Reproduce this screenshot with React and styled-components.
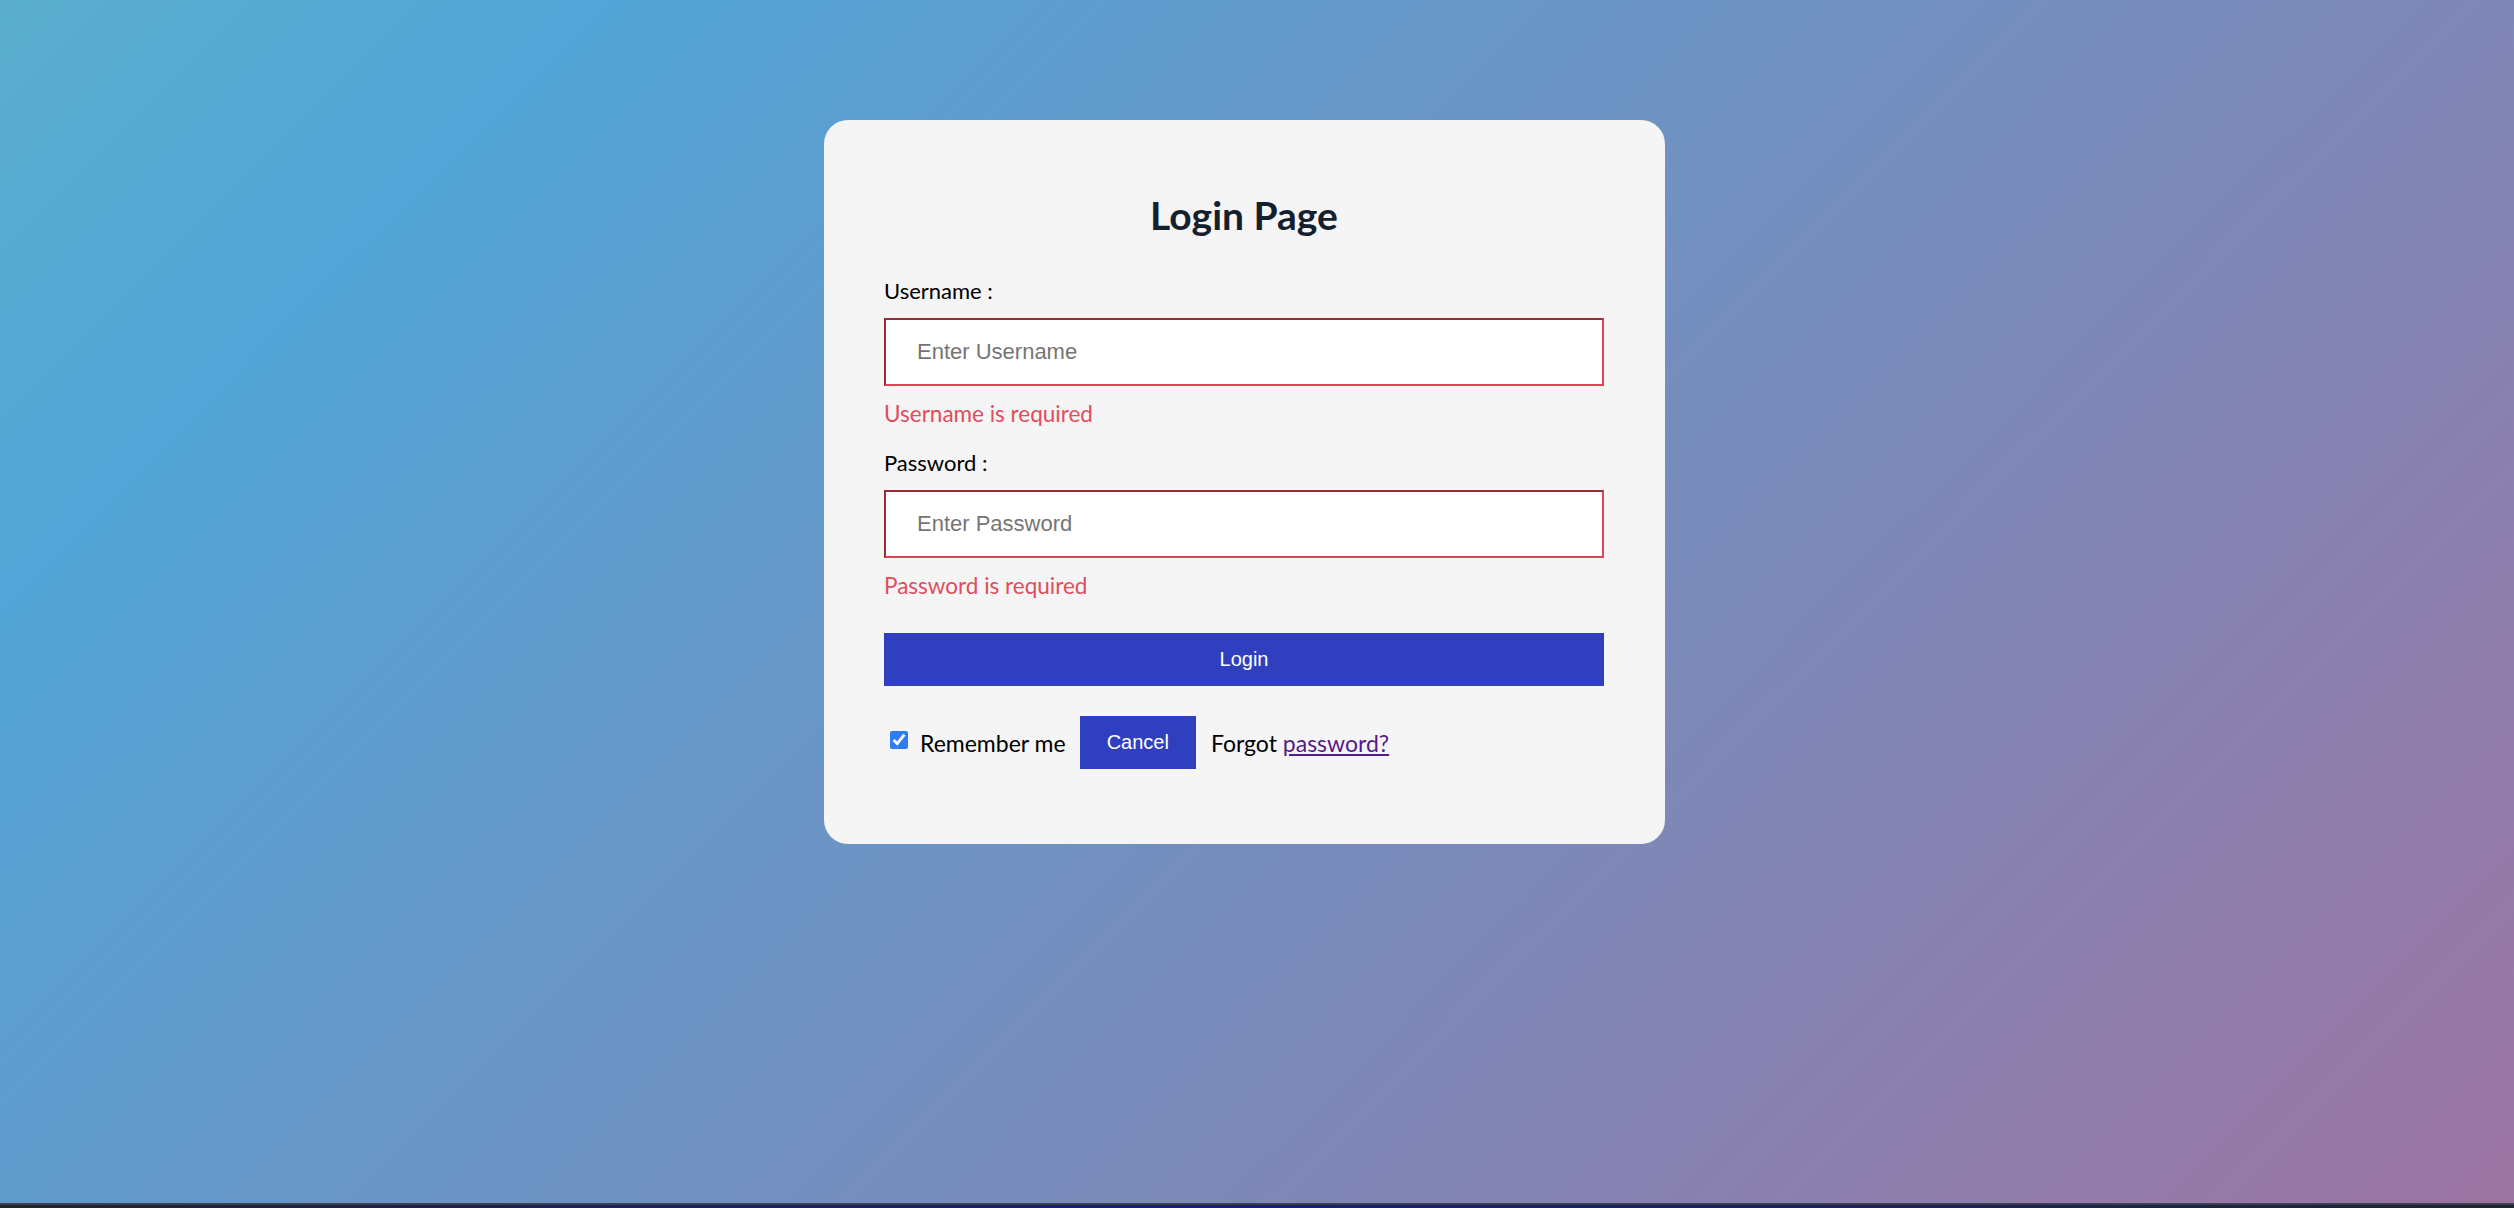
import React from 'react'
import styled, { createGlobalStyle } from 'styled-components';

const GlobalStyle = createGlobalStyle`
    html, body {
        margin: 0;
        padding: 0;
        height: 100%;
    }
    body {
        font-family: Lato, "Open Sans", sans-serif;
    }
    * {
        box-sizing: border-box;
    }
`;

function Field({ label, placeholder, type, error }){
    return (
        <>
            <Label>{label}</Label>
            <Input type={type} placeholder={placeholder} />
            <ErrorText>{error}</ErrorText>
        </>
    )
}

function App(){
    return (
        <>
            <GlobalStyle />
            <Page>
                <Background>
                    <Card>
                        <Title>Login Page</Title>
                        <Field label="Username :" placeholder="Enter Username" type="text" error="Username is required" />
                        <Spacer />
                        <Field label="Password :" placeholder="Enter Password" type="password" error="Password is required" />
                        <SubmitButton type="button">Login</SubmitButton>
                        <BottomRow>
                            <CheckBox type="checkbox" defaultChecked />
                            <RowText>Remember me</RowText>
                            <CancelButton type="button">Cancel</CancelButton>
                            <RowText>Forgot <a href="#">password?</a></RowText>
                        </BottomRow>
                    </Card>
                </Background>
                <TaskbarEdge />
            </Page>
        </>
    )
}

const Page = styled.div`
    height: 100vh;
    display: flex;
    flex-direction: column;
`;

const Background = styled.main`
    flex: 1;
    display: flex;
    justify-content: center;
    align-items: flex-start;
    padding: 120px 25px 0 0;
    background: linear-gradient(135deg, #5aaecd 0%, #52a5d7 16%, #9c74a2 100%);
`;

const TaskbarEdge = styled.div`
    height: 5px;
    border-top: 2px solid #3b4050;
    background: linear-gradient(to right, #22252c 0%, #1a2160 30%, #16206e 50%, #1a2160 70%, #22252c 100%);
`;

const Card = styled.section`
    width: 841px;
    height: 724px;
    padding: 71px 61px 0 60px;
    background: #f5f5f5;
    border-radius: 24px;
    display: flex;
    flex-direction: column;
`;

const Title = styled.h2`
    margin: 0 0 37px 0;
    height: 48px;
    line-height: 48px;
    text-align: center;
    font-size: 39px;
    font-weight: 700;
    color: #14202d;
`;

const Label = styled.label`
    display: block;
    height: 30px;
    line-height: 30px;
    font-size: 22px;
    color: #000;
    margin-bottom: 12px;
`;

const Input = styled.input`
    width: 100%;
    height: 68px;
    padding: 0 20px 0 31px;
    border: 2px solid;
    border-color: #9c2c3a #dd4556 #dd4556 #9c2c3a;
    background: #fff;
    font-family: "Liberation Sans", Arial, sans-serif;
    font-size: 22px;
    color: #222;
    outline: none;
    &::placeholder {
        color: #757575;
    }
`;

const ErrorText = styled.div`
    margin-top: 13px;
    height: 29px;
    line-height: 29px;
    font-size: 22.5px;
    color: #e24c5c;
`;

const Spacer = styled.div`
    height: 20px;
    flex-shrink: 0;
`;

const BaseButton = styled.button`
    height: 53px;
    border: none;
    background: #2f3fbf;
    color: #fff;
    font-family: "Liberation Sans", Arial, sans-serif;
    font-size: 20px;
    cursor: pointer;
`;

const SubmitButton = styled(BaseButton)`
    width: 100%;
    margin-top: 33px;
`;

const CancelButton = styled(BaseButton)`
    padding: 0 27px;
    margin: 0 15px 0 14px;
`;

const BottomRow = styled.div`
    display: flex;
    align-items: center;
    margin-top: 30px;
`;

const CheckBox = styled.input`
    width: 18px;
    height: 18px;
    margin: -5px 12px 0 6px;
    accent-color: #2f7cf6;
`;

const RowText = styled.span`
    font-size: 23px;
    color: #000;
    a {
        color: #551a8b;
        text-decoration: underline;
    }
`;

export default App;
